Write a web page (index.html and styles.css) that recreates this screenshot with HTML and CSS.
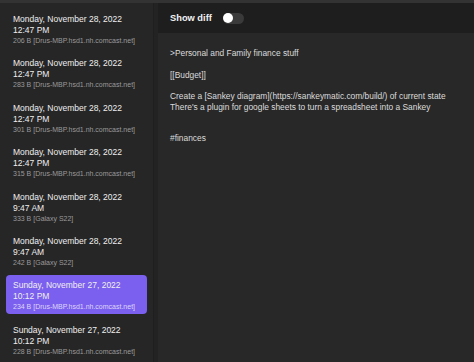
FILE: index.html
```html
<!DOCTYPE html>
<html lang="en">
<head>
    <meta charset="UTF-8">
    <meta name="viewport" content="width=device-width, initial-scale=1.0">
    <title>Version history</title>
    <link rel="stylesheet" href="styles.css">
</head>
<body>
    <div class="top-strip"></div>
    <div class="container">
        <div class="sidebar">
            <div class="version">
                <div class="version-date">Monday, November 28, 2022</div>
                <div class="version-time">12:47 PM</div>
                <div class="version-meta">206 B [Drus-MBP.hsd1.nh.comcast.net]</div>
            </div>
            <div class="version">
                <div class="version-date">Monday, November 28, 2022</div>
                <div class="version-time">12:47 PM</div>
                <div class="version-meta">283 B [Drus-MBP.hsd1.nh.comcast.net]</div>
            </div>
            <div class="version">
                <div class="version-date">Monday, November 28, 2022</div>
                <div class="version-time">12:47 PM</div>
                <div class="version-meta">301 B [Drus-MBP.hsd1.nh.comcast.net]</div>
            </div>
            <div class="version">
                <div class="version-date">Monday, November 28, 2022</div>
                <div class="version-time">12:47 PM</div>
                <div class="version-meta">315 B [Drus-MBP.hsd1.nh.comcast.net]</div>
            </div>
            <div class="version">
                <div class="version-date">Monday, November 28, 2022</div>
                <div class="version-time">9:47 AM</div>
                <div class="version-meta">333 B [Galaxy S22]</div>
            </div>
            <div class="version">
                <div class="version-date">Monday, November 28, 2022</div>
                <div class="version-time">9:47 AM</div>
                <div class="version-meta">242 B [Galaxy S22]</div>
            </div>
            <div class="version selected">
                <div class="version-date">Sunday, November 27, 2022</div>
                <div class="version-time">10:12 PM</div>
                <div class="version-meta">234 B [Drus-MBP.hsd1.nh.comcast.net]</div>
            </div>
            <div class="version">
                <div class="version-date">Sunday, November 27, 2022</div>
                <div class="version-time">10:12 PM</div>
                <div class="version-meta">228 B [Drus-MBP.hsd1.nh.comcast.net]</div>
            </div>
        </div>
        <div class="gutter"></div>
        <div class="main">
            <div class="header">
                <span class="header-title">Show diff</span>
                <label class="switch">
                    <input type="checkbox">
                    <span class="slider"></span>
                </label>
            </div>
            <div class="note">
                <p>&gt;Personal and Family finance stuff</p>
                <p>[[Budget]]</p>
                <p>Create a [Sankey diagram](https://sankeymatic.com/build/) of current state<br>There's a plugin for google sheets to turn a spreadsheet into a Sankey</p>
                <p class="tag">#finances</p>
            </div>
        </div>
    </div>
</body>
</html>
```
FILE: styles.css
```css
html, body {
    height: 100%;
}
body {
    font-family: "Liberation Sans", Arial, sans-serif;
    margin: 0;
    padding: 0;
    background-color: #282828;
    color: #dcdcdc;
    display: flex;
    flex-direction: column;
    overflow: hidden;
}
.top-strip {
    height: 3px;
    background-color: #333333;
    flex-shrink: 0;
}
.container {
    display: flex;
    flex: 1;
    min-height: 0;
}
.sidebar {
    width: 141px;
    padding: 6px 6px 0 6px;
    background-color: #262626;
    display: flex;
    flex-direction: column;
    gap: 5.4px;
    flex-shrink: 0;
}
.version {
    padding: 5px 7px 3px 7px;
    border-radius: 4px;
    white-space: nowrap;
}
.version.selected {
    background-color: #7b5fee;
}
.version-date,
.version-time {
    font-size: 8.5px;
    line-height: 11px;
    color: #efefef;
}
.version-meta {
    font-size: 7px;
    line-height: 9px;
    color: #9a9a9a;
}
.version.selected .version-meta {
    color: #ddd6fb;
}
.gutter {
    width: 4px;
    background-color: #232323;
    border-left: 1px solid #1f1f1f;
    flex-shrink: 0;
}
.main {
    flex: 1;
    display: flex;
    flex-direction: column;
}
.header {
    height: 30px;
    background-color: #1e1e1e;
    display: flex;
    align-items: center;
    padding-left: 12px;
    gap: 11px;
}
.header-title {
    font-size: 9.3px;
    font-weight: bold;
    color: #f2f2f2;
}
.switch {
    position: relative;
    display: inline-block;
    width: 21px;
    height: 11px;
}
.switch input {
    opacity: 0;
    width: 0;
    height: 0;
}
.slider {
    position: absolute;
    top: 0;
    left: 0;
    right: 0;
    bottom: 0;
    background-color: #3a3a3a;
    border-radius: 6px;
    cursor: pointer;
}
.slider:before {
    position: absolute;
    content: "";
    width: 10px;
    height: 10px;
    left: 0;
    top: 0.5px;
    background-color: #ffffff;
    border-radius: 50%;
}
.note {
    padding: 15px 12px 0 12px;
    font-size: 8.4px;
    line-height: 11px;
}
.note p {
    margin: 0 0 10.5px 0;
}
.note .tag {
    margin-top: 20px;
}
```
